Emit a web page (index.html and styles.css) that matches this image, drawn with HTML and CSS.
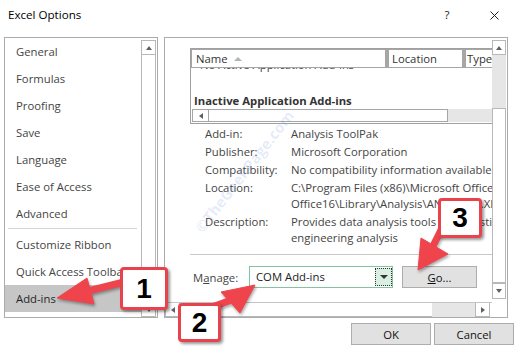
FILE: index.html
```html
<!DOCTYPE html>
<html>
<head>
<meta charset="utf-8">
<link rel="stylesheet" href="styles.css">
</head>
<body>
<header class="titlebar">
  <span class="title">Excel Options</span>
  <span class="help">?</span>
  <svg class="close" width="9" height="9" viewBox="0 0 9 9"><path d="M0.5 0.5L8.5 8.5M8.5 0.5L0.5 8.5" stroke="#222" stroke-width="1" fill="none"/></svg>
</header>
<div class="main">
  <nav class="sidebar">
    <ul class="nav-list">
      <li class="nav-item">General</li>
      <li class="nav-item">Formulas</li>
      <li class="nav-item">Proofing</li>
      <li class="nav-item">Save</li>
      <li class="nav-item">Language</li>
      <li class="nav-item">Ease of Access</li>
      <li class="nav-item">Advanced</li>
      <li class="nav-sep"></li>
      <li class="nav-item">Customize Ribbon</li>
      <li class="nav-item">Quick Access Toolbar</li>
      <li class="nav-item active">Add-ins</li>
    </ul>
    <div class="sb-vscroll">
      <div class="sb-btn"><span class="tri-up"></span></div>
      <div class="sb-thumb"></div>
      <div class="sb-btn"><span class="tri-down"></span></div>
    </div>
  </nav>
  <section class="panel">
    <div class="content">
      <div class="addin-list">
        <div class="list-header">
          <div class="hcell c-name">Name <span class="sort"></span></div>
          <div class="hcell c-loc">Location</div>
          <div class="hcell c-type">Type</div>
        </div>
        <div class="list-body">
          <div class="row-cut">No Active Application Add-ins</div>
          <div class="group">Inactive Application Add-ins</div>
        </div>
        <div class="list-hs">
          <div class="lh-btn"><span class="tri-left"></span></div>
          <div class="lh-thumb"></div>
          <div class="lh-track"></div>
        </div>
      </div>
      <div class="details">
        <span class="lbl">Add-in:</span><span class="val">Analysis ToolPak</span>
        <span class="lbl">Publisher:</span><span class="val">Microsoft Corporation</span>
        <span class="lbl">Compatibility:</span><span class="val">No compatibility information available</span>
        <span class="lbl">Location:</span><span class="val">C:\Program Files (x86)\Microsoft Office\root\<br>Office16\Library\Analysis\ANALYS32.XLL</span>
        <span class="lbl">Description:</span><span class="val">Provides data analysis tools for statistical and<br>engineering analysis</span>
      </div>
      <div class="sep"></div>
      <div class="manage">
        <span class="manage-lbl">M<u>a</u>nage:</span>
        <div class="combo">
          <span class="combo-text">COM Add-ins</span>
          <span class="combo-btn"><span class="tri-down dark"></span></span>
        </div>
        <button class="btn go"><u>G</u>o...</button>
      </div>
    </div>
    <div class="vscroll">
      <div class="vs-btn"><span class="tri-up"></span></div>
      <div class="vs-track"></div>
      <div class="vs-thumb"></div>
      <div class="vs-btn down"><span class="tri-down"></span></div>
    </div>
    <div class="hscroll">
      <div class="hs-btn"><span class="tri-left"></span></div>
      <div class="hs-thumb"></div>
      <div class="hs-track"></div>
      <div class="hs-btn"><span class="tri-right"></span></div>
    </div>
    <div class="corner"></div>
  </section>
</div>
<footer class="buttons">
  <button class="btn foot">OK</button>
  <button class="btn foot">Cancel</button>
</footer>

<div class="watermark">©TheGeekPage.com</div>

<svg class="arrows" width="514" height="348" viewBox="0 0 514 348">
  <g fill="#ef444c" stroke="#ef444c" stroke-linejoin="round">
    <line x1="124" y1="282" x2="88" y2="291" stroke-width="7"/>
    <polygon points="57,298 87,278 94,304" stroke-width="1"/>
    <line x1="212" y1="307" x2="234" y2="299" stroke-width="7"/>
    <polygon points="255,285 221,292 240,313" stroke-width="1"/>
    <line x1="443" y1="226" x2="432" y2="248" stroke-width="7"/>
    <polygon points="418,270 421,238 448,254" stroke-width="1"/>
  </g>
</svg>

<div class="badge b1">1</div>
<div class="badge b2">2</div>
<div class="badge b3">3</div>
</body>
</html>
```
FILE: styles.css
```css
* { box-sizing: border-box; margin: 0; padding: 0; }
html, body { width: 514px; height: 348px; overflow: hidden; background: #fff; }
body {
  position: relative;
  font-family: "Open Sans", "Noto Sans", sans-serif;
  font-size: 11.3px;
  color: #444;
}

/* title bar */
.titlebar {
  height: 37px;
  display: flex;
  align-items: flex-start;
  padding: 7px 0 0 8px;
  color: #000;
  font-size: 11.6px;
  line-height: 16px;
}
.title { flex: 1; }
.help { width: 12px; text-align: center; margin-right: 37px; color: #222; }
.close { margin-top: 4px; margin-right: 15px; }

/* main */
.main { display: flex; gap: 6px; padding-left: 4px; height: 281px; }

/* sidebar */
.sidebar {
  width: 154px;
  border: 1px solid #ababab;
  display: flex;
}
.nav-list { width: 136px; list-style: none; }
.nav-item {
  height: 27px;
  line-height: 27px;
  padding-left: 11px;
  white-space: nowrap;
  overflow: hidden;
  color: #444;
}
.nav-item.active { background: #c6c6c6; color: #262626; }
.nav-sep { height: 3px; margin: 1px 4px 0 3px; border-top: 1px solid #d4d4d4; }

.sb-vscroll {
  width: 16px;
  padding: 2px 1px 0 0;
  display: flex;
  flex-direction: column;
}
.sb-btn {
  height: 15px;
  border: 1px solid #b8b8b8;
  display: flex;
  align-items: center;
  justify-content: center;
}
.sb-thumb { flex: 1; border-left: 1px solid #b8b8b8; border-right: 1px solid #b8b8b8; }

/* triangles */
.tri-up, .tri-down, .tri-left, .tri-right { display: block; width: 0; height: 0; }
.tri-up { border-left: 3.5px solid transparent; border-right: 3.5px solid transparent; border-bottom: 4px solid #606060; }
.tri-down { border-left: 3.5px solid transparent; border-right: 3.5px solid transparent; border-top: 4px solid #606060; }
.tri-left { border-top: 3.5px solid transparent; border-bottom: 3.5px solid transparent; border-right: 4px solid #606060; }
.tri-right { border-top: 3.5px solid transparent; border-bottom: 3.5px solid transparent; border-left: 4px solid #606060; }
.tri-down.dark { border-top-color: #333; border-left-width: 4px; border-right-width: 4px; }

/* panel */
.panel {
  width: 344px;
  border: 1px solid #ababab;
  display: grid;
  grid-template-columns: 327px 15px;
  grid-template-rows: 264px 15px;
}
.content {
  overflow: hidden;
  padding: 10px 0 0 25px;
  white-space: nowrap;
}

/* add-in list */
.addin-list {
  width: 340px;
  border: 1px solid #a0a0a0;
  border-right: none;
}
.list-header {
  display: flex;
  gap: 4px;
  background: #a6a6a6;
  padding: 1px 0 1px 1px;
  height: 19px;
}
.hcell {
  background: #fff;
  height: 17px;
  line-height: 17px;
  padding-left: 4px;
  color: #333;
  display: flex;
  align-items: center;
  gap: 6px;
}
.c-name { width: 193px; }
.c-loc { width: 73px; padding-left: 3px; }
.c-type { width: 60px; padding-left: 1px; }
.sort {
  width: 0; height: 0;
  border-left: 4px solid transparent;
  border-right: 4px solid transparent;
  border-bottom: 4px solid #b4b4b4;
}
.list-body { overflow: hidden; height: 41px; }
.row-cut { margin-top: -11px; line-height: 16px; padding-left: 9px; color: #444; }
.group { margin-top: 20px; line-height: 16px; padding-left: 3px; font-weight: 700; color: #333; }
.list-hs { display: flex; height: 14px; padding: 0 0 1px 1px; }
.lh-btn {
  width: 17px;
  border: 1px solid #a6a6a6;
  display: flex; align-items: center; justify-content: center;
}
.lh-thumb { width: 239px; border: 1px solid #a6a6a6; border-left: none; }
.lh-track { flex: 1; background: #e6e6e6; }

/* details */
.details {
  margin-top: 2px;
  padding-left: 15px;
  display: grid;
  grid-template-columns: 86px auto;
  row-gap: 2px;
  line-height: 16px;
}
.lbl, .val { color: #444; }

.sep { margin-top: 8px; width: 302px; border-top: 1px solid #c8c8c8; }

.manage {
  margin-top: 11px;
  display: flex;
  align-items: center;
  height: 22px;
}
.manage-lbl { width: 59px; padding-left: 3px; color: #444; }
.combo {
  width: 144px;
  height: 22px;
  border: 1px solid #86c29f;
  display: flex;
  align-items: stretch;
}
.combo-text { flex: 1; padding-left: 6px; line-height: 20px; color: #222; }
.combo-btn {
  width: 17px;
  margin: 1px 0;
  border: 1px dotted #333;
  background: #d8efe1;
  display: flex; align-items: center; justify-content: center;
}
.btn {
  font-family: inherit;
  font-size: 11.3px;
  color: #111;
  background: #e1e1e1;
  border: 1px solid #adadad;
  height: 22px;
}
.go { width: 75px; margin-left: 9px; }

/* panel scrollbars */
.vscroll { padding-top: 2px; display: flex; flex-direction: column; }
.vs-btn {
  height: 15px;
  width: 14px;
  border: 1px solid #b8b8b8;
  display: flex; align-items: center; justify-content: center;
}
.vs-btn.down { height: 16px; }
.vs-track { height: 53px; width: 14px; background: #e6e6e6; }
.vs-thumb { height: 175px; width: 14px; border: 1px solid #b8b8b8; border-top: 1px solid #b8b8b8; }

.hscroll { display: flex; border-top: 1px solid #c4c4c4; }
.hs-btn {
  width: 15px;
  border: 1px solid #b8b8b8;
  border-top: none;
  display: flex; align-items: center; justify-content: center;
}
.hs-thumb { width: 252px; border-bottom: 1px solid #b8b8b8; }
.hs-track { width: 43px; background: #e6e6e6; }
.corner { background: #fff; }

/* footer */
.buttons {
  display: flex;
  justify-content: flex-end;
  gap: 3px;
  margin-top: 5px;
}
.foot { width: 80px; }

/* overlays */
.watermark {
  position: absolute;
  left: 198px;
  top: 220px;
  transform-origin: left center;
  transform: rotate(-52deg);
  font-size: 15px;
  font-weight: 700;
  font-family: "Open Sans", sans-serif;
  color: rgba(90, 130, 215, 0.16);
  white-space: nowrap;
}
.arrows {
  position: absolute;
  left: 0; top: 0;
  filter: drop-shadow(1px 2px 1.5px rgba(0,0,0,0.35));
}
.badge {
  position: absolute;
  background: #fff;
  border: 3px solid #e8434d;
  border-radius: 4px;
  box-shadow: 2px 2px 3px rgba(0,0,0,0.4);
  display: flex;
  align-items: center;
  justify-content: center;
  font-family: "Liberation Sans", Arial, sans-serif;
  font-weight: 700;
  font-size: 28px;
  color: #000;
}
.b1 { left: 120px; top: 267px; width: 48px; height: 43px; }
.b2 { left: 178px; top: 303px; width: 43px; height: 39px; }
.b3 { left: 438px; top: 198px; width: 44px; height: 40px; }
```
